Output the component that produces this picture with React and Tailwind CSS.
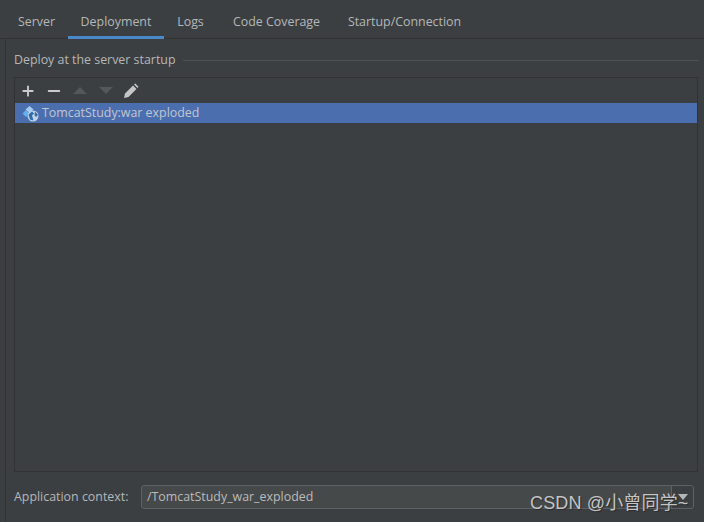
import { Plus, Minus } from 'lucide-react'

const TABS = [
  { name: 'Server', w: 'w-[63px]' },
  { name: 'Deployment', w: 'w-[96px]', active: true },
  { name: 'Logs', w: 'w-[53px]' },
  { name: 'Code Coverage', w: 'w-[119px]' },
  { name: 'Startup/Connection', w: 'w-[137px]' },
]

function ArtifactIcon() {
  return (
    <svg width="17" height="17" viewBox="0 0 17 17" className="shrink-0">
      <path d="M7.5 1 L11.5 4.5 L7.5 8 L3.5 4.5 Z" fill="#a5cdf0" />
      <path d="M4 5 L7.5 8.5 L4 12 L0.5 8.5 Z" fill="#62b0ee" />
      <circle cx="11" cy="11" r="5.5" fill="#c3d3e6" />
      <path d="M6.5 9.5 L10 6.5 L12 8.5 L10 10.5 L11.5 15.5 L8 14.5 Z" fill="#2f6cab" />
      <path d="M13 6.5 L16 10 L14 12 L12.5 10 Z" fill="#2f6cab" />
    </svg>
  )
}

function PencilIcon() {
  return (
    <svg width="16" height="16" viewBox="0 0 16 16" className="ml-[10px] shrink-0">
      <path d="M1 15 L2 10.5 L10 2.5 L13.5 6 L5.5 14 Z" fill="#c4c6c7" />
      <path d="M11 1.5 L12.3 0.5 L15.5 3.7 L14.5 5 Z" fill="#c4c6c7" />
    </svg>
  )
}

export default function App() {
  return (
    <div className="relative w-[704px] h-[522px] overflow-hidden bg-[#3c3f41] text-[12.4px] text-[#b4b7b9] font-['Open_Sans','Noto_Sans',sans-serif]">
      {/* Tabs */}
      <div className="flex h-[39px] pl-[5px] border-b border-[#323232]">
        {TABS.map((tab) => (
          <div
            key={tab.name}
            className={`${tab.w} h-[39px] shrink-0 flex items-center justify-center pt-[8px] ${tab.active ? 'border-b-[3px] border-[#4a88c7]' : 'pb-[3px]'}`}
          >
            {tab.name}
          </div>
        ))}
      </div>

      {/* Panel */}
      <div className="h-[483px] ml-[5px] border-l border-[#323232] pl-[8px] pr-[6px] flex flex-col">
        <div className="h-[38px] flex items-center gap-[8px] pt-[4px] shrink-0">
          <span className="whitespace-nowrap">Deploy at the server startup</span>
          <div className="flex-1 h-px bg-[#4f5254] mr-[-1px]" />
        </div>

        <div className="h-[395px] border border-[#323232] flex flex-col shrink-0">
          <div className="h-[25px] flex items-center pl-[5px] shrink-0">
            <Plus size={16} strokeWidth={2.8} className="text-[#c9cbcc]" />
            <Minus size={18} strokeWidth={2.6} className="text-[#c9cbcc] ml-[9px]" />
            <div className="ml-[10px] w-0 h-0 border-x-[7px] border-x-transparent border-b-[7px] border-b-[#55585a]" />
            <div className="ml-[12px] w-0 h-0 border-x-[7px] border-x-transparent border-t-[7px] border-t-[#55585a]" />
            <PencilIcon />
          </div>
          <div className="h-[20px] bg-[#4b6eaf] flex items-center pl-[7px] gap-[3px] pt-[1px] text-[#c2c6cf]">
            <ArtifactIcon />
            <span>TomcatStudy:war exploded</span>
          </div>
        </div>

        <div className="flex items-center mt-[13px]">
          <span className="w-[127px] shrink-0">Application context:</span>
          <div className="w-[553px] h-[24px] flex border border-[#5e6163] rounded-[3px] bg-[#45494a]">
            <div className="flex-1 flex items-center pl-[5px] text-[#bbbbbb]">/TomcatStudy_war_exploded</div>
            <div className="w-[22px] border-l border-[#5e6163] flex items-center justify-center bg-[#3c3f41] rounded-r-[3px]">
              <div className="w-0 h-0 border-x-[5px] border-x-transparent border-t-[6px] border-t-[#b4b7b9]" />
            </div>
          </div>
        </div>
      </div>

      {/* Watermark */}
      <div className="absolute left-[530px] top-[491px] text-[18px] tracking-[0.15px] leading-[24px] whitespace-nowrap text-[#c4c4c4] [text-shadow:1px_1px_1px_#2a2a2a] font-['Liberation_Sans','Noto_Sans_CJK_SC',sans-serif]">
        CSDN @小曾同学~
      </div>
    </div>
  )
}
